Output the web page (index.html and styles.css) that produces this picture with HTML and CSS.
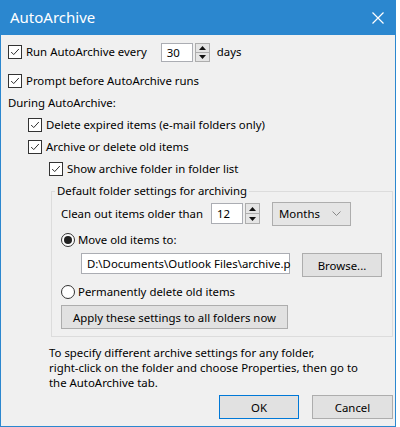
FILE: index.html
```html
<!DOCTYPE html>
<html lang="en">
<head>
    <meta charset="UTF-8">
    <meta name="viewport" content="width=device-width, initial-scale=1.0">
    <title>AutoArchive</title>
    <link rel="stylesheet" href="styles.css">
</head>
<body>
    <div class="window">
        <div class="titlebar">
            <span class="title">AutoArchive</span>
            <svg class="close" width="12" height="12" viewBox="0 0 12 12">
                <path d="M0.5 0.5 L11.5 11.5 M11.5 0.5 L0.5 11.5" stroke="#ffffff" stroke-width="1.2" fill="none"/>
            </svg>
        </div>

        <div class="content">
            <div class="rows">
                <div class="row row-first">
                    <span class="check on"><svg viewBox="0 0 14 14"><path d="M2.5 7 L5.5 10 L11.5 3.5"/></svg></span>
                    <span class="label">Run AutoArchive every</span>
                    <div class="spin spin-days">
                        <span class="spin-value">30</span>
                        <div class="spin-btns">
                            <span class="spin-btn"><svg viewBox="0 0 7 4"><path d="M0 4 L3.5 0 L7 4 Z"/></svg></span>
                            <span class="spin-btn"><svg viewBox="0 0 7 4"><path d="M0 0 L7 0 L3.5 4 Z"/></svg></span>
                        </div>
                    </div>
                    <span class="label days">days</span>
                </div>

                <div class="row row-second">
                    <span class="check on"><svg viewBox="0 0 14 14"><path d="M2.5 7 L5.5 10 L11.5 3.5"/></svg></span>
                    <span class="label">Prompt before AutoArchive runs</span>
                </div>

                <div class="row">
                    <span class="label">During AutoArchive:</span>
                </div>

                <div class="row indent-1">
                    <span class="check on"><svg viewBox="0 0 14 14"><path d="M2.5 7 L5.5 10 L11.5 3.5"/></svg></span>
                    <span class="label">Delete expired items (e-mail folders only)</span>
                </div>

                <div class="row indent-1">
                    <span class="check on"><svg viewBox="0 0 14 14"><path d="M2.5 7 L5.5 10 L11.5 3.5"/></svg></span>
                    <span class="label">Archive or delete old items</span>
                </div>

                <div class="row indent-2">
                    <span class="check on"><svg viewBox="0 0 14 14"><path d="M2.5 7 L5.5 10 L11.5 3.5"/></svg></span>
                    <span class="label">Show archive folder in folder list</span>
                </div>
            </div>

            <fieldset class="group">
                <legend>Default folder settings for archiving</legend>

                <div class="row row-clean">
                    <span class="label">Clean out items older than</span>
                    <div class="spin spin-age">
                        <span class="spin-value">12</span>
                        <div class="spin-btns">
                            <span class="spin-btn"><svg viewBox="0 0 7 4"><path d="M0 4 L3.5 0 L7 4 Z"/></svg></span>
                            <span class="spin-btn"><svg viewBox="0 0 7 4"><path d="M0 0 L7 0 L3.5 4 Z"/></svg></span>
                        </div>
                    </div>
                    <div class="select">
                        <span>Months</span>
                        <svg width="9" height="5" viewBox="0 0 9 5"><path d="M0.5 0.5 L4.5 4.5 L8.5 0.5" stroke="#888" stroke-width="1" fill="none"/></svg>
                    </div>
                </div>

                <div class="row row-radio">
                    <span class="radio on"></span>
                    <span class="label">Move old items to:</span>
                </div>

                <div class="row row-path">
                    <span class="textbox"><span class="path">D:\Documents\Outlook Files\archive.p</span></span>
                    <span class="button browse">Browse...</span>
                </div>

                <div class="row row-radio">
                    <span class="radio"></span>
                    <span class="label">Permanently delete old items</span>
                </div>

                <span class="button apply">Apply these settings to all folders now</span>
            </fieldset>

            <p class="note">
                To specify different archive settings for any folder,<br>
                right-click on the folder and choose Properties, then go to<br>
                the AutoArchive tab.
            </p>

            <div class="actions">
                <span class="button default">OK</span>
                <span class="button">Cancel</span>
            </div>
        </div>
    </div>
</body>
</html>
```

FILE: styles.css
```css
body {
    margin: 0;
    background-color: #ffffff;
    font-family: "Noto Sans", "Open Sans", sans-serif;
    font-size: 11.4px;
    color: #000000;
}

.window {
    width: 394px;
    height: 426px;
    background-color: #f0f0f0;
    border: 1px solid #2b87cf;
    border-top: none;
    overflow: hidden;
}

.titlebar {
    height: 35px;
    background-color: #2b87cf;
    display: flex;
    align-items: center;
    justify-content: space-between;
    padding: 0 10px 0 9px;
}

.title {
    color: #ffffff;
    font-size: 15px;
    padding-bottom: 1px;
}

.close {
    margin-right: 1px;
}

.content {
    padding: 7px 0 0 7px;
}

.rows {
    display: flex;
    flex-direction: column;
    gap: 1px;
}

.row {
    display: flex;
    align-items: center;
    height: 21px;
    white-space: nowrap;
}

.row-first {
    height: 20px;
}

.row-second {
    margin-top: 7px;
}

.indent-1 {
    padding-left: 20px;
}

.indent-2 {
    padding-left: 41px;
}

.label {
    line-height: 16px;
}

.check {
    width: 12px;
    height: 12px;
    border: 1px solid #333333;
    background-color: #ffffff;
    margin-right: 4px;
    flex: none;
}

.check svg {
    display: block;
    width: 12px;
    height: 12px;
}

.check path {
    fill: none;
    stroke: #222222;
    stroke-width: 1.1;
}

.radio {
    width: 12px;
    height: 12px;
    border: 1px solid #333333;
    border-radius: 50%;
    background-color: #ffffff;
    margin-right: 3px;
    flex: none;
    display: flex;
    align-items: center;
    justify-content: center;
}

.radio.on::after {
    content: "";
    width: 8px;
    height: 8px;
    border-radius: 50%;
    background-color: #222222;
}

.spin {
    display: flex;
    align-items: stretch;
    height: 19px;
}

.spin-days {
    margin-left: 14px;
}

.spin-age {
    margin-left: 8px;
    height: 21px;
}

.spin-value {
    width: 25px;
    border: 1px solid #abadb3;
    background-color: #ffffff;
    padding-left: 5px;
    display: flex;
    align-items: center;
}

.spin-btns {
    display: flex;
    flex-direction: column;
    margin-left: 2px;
    width: 15px;
}

.spin-btn {
    flex: 1;
    border: 1px solid #adadad;
    background-color: #e5e5e5;
    display: flex;
    align-items: center;
    justify-content: center;
}

.spin-btn + .spin-btn {
    border-top: none;
}

.spin-btn svg {
    width: 7px;
    height: 4px;
}

.spin-btn path {
    fill: #111111;
}

.days {
    margin-left: 7px;
}

.group {
    margin: 4px 0 0 43px;
    width: 324px;
    padding: 0 8px 7px 8px;
    border: 1px solid #dcdcdc;
}

.group legend {
    padding: 0 2px;
    margin-left: -5px;
    line-height: 16px;
}

.row-clean {
    height: 23px;
    margin-top: 3px;
    padding-left: 1px;
}

.select {
    margin-left: 12px;
    width: 62px;
    height: 22px;
    border: 1px solid #adadad;
    background-color: #e5e5e5;
    display: flex;
    align-items: center;
    justify-content: space-between;
    padding: 0 9px 0 6px;
}

.row-radio {
    height: 20px;
    margin-top: 5px;
    padding-left: 1px;
}

.row-path {
    height: 24px;
    margin-top: 3px;
    align-items: flex-start;
    padding-left: 21px;
}

.textbox {
    width: 202px;
    height: 19px;
    border: 1px solid #abadb3;
    background-color: #ffffff;
    padding-left: 5px;
    display: flex;
    align-items: center;
}

.button {
    box-sizing: border-box;
    height: 24px;
    width: 81px;
    border: 1px solid #adadad;
    background-color: #e1e1e1;
    display: inline-flex;
    align-items: center;
    justify-content: center;
    white-space: nowrap;
}

.browse {
    margin-left: 12px;
    width: 80px;
}

.apply {
    width: 227px;
    margin: 3px 0 0 1px;
}

.button.default {
    border-color: #0078d7;
    width: 80px;
}

.note {
    margin: 8px 0 0 41px;
    line-height: 15px;
}

.actions {
    display: flex;
    justify-content: flex-end;
    gap: 13px;
    margin-top: 5px;
    padding-right: 2px;
}
```
